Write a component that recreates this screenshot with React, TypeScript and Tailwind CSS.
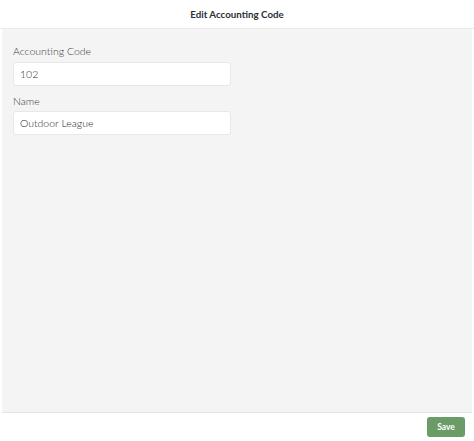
import React from 'react';

export default function App() {
  return (
    <div className="w-[474px] h-[441px] bg-white flex flex-col font-['Lato','Open_Sans',sans-serif]">
      {/* Header */}
      <div className="h-[29px] shrink-0 flex items-center justify-center border-b border-[#ececec]">
        <h1 className="text-[9.75px] font-bold text-[#2b2f36]">Edit Accounting Code</h1>
      </div>

      {/* Body */}
      <div className="flex-1 mx-[2px] bg-[#f4f4f4] border-b border-[#e6e6e6] px-[11px] pt-[15px]">
        <div className="w-[218px] flex flex-col">
          <label className="text-[10.5px] font-light text-[#3a3a3a] leading-[14px]">Accounting Code</label>
          <input
            defaultValue="102"
            className="mt-[4px] h-[24px] w-full bg-white rounded-[3px] border border-[#e8e8e8] px-[6px] text-[10.5px] font-light text-[#2a2a2a] outline-none"
          />
          <label className="mt-[8px] text-[10.5px] font-light text-[#3a3a3a] leading-[14px]">Name</label>
          <input
            defaultValue="Outdoor League"
            className="mt-[3px] h-[24px] w-full bg-white rounded-[3px] border border-[#e8e8e8] px-[6px] text-[10.5px] font-light text-[#2a2a2a] outline-none"
          />
        </div>
      </div>

      {/* Footer */}
      <div className="h-[28px] shrink-0 flex items-center justify-end pr-[9px]">
        <button className="w-[38px] h-[20px] rounded-[3px] bg-[#6b9c68] text-white text-[8.5px] font-bold">Save</button>
      </div>
    </div>
  );
}
